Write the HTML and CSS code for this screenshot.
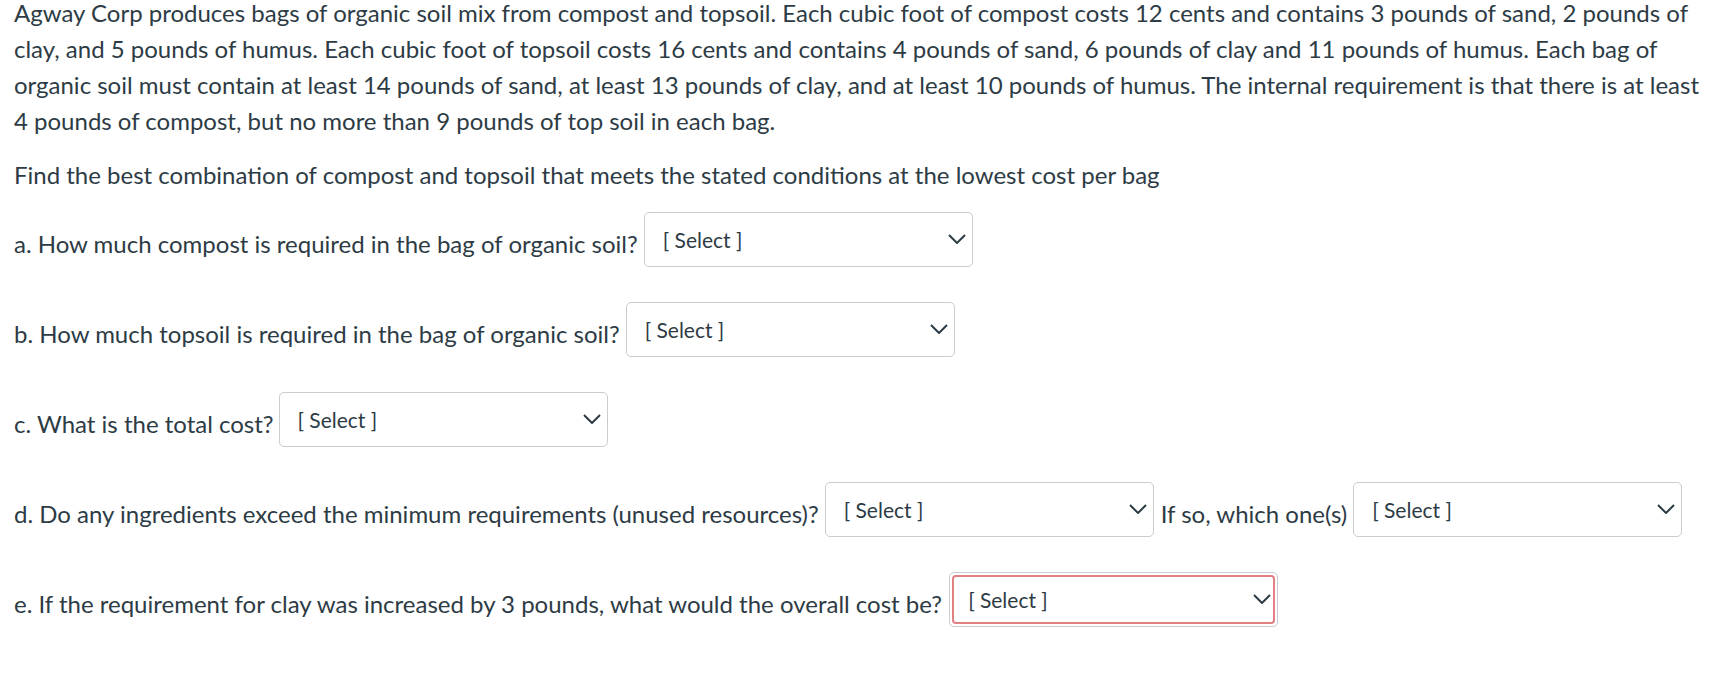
FILE: index.html
```html
<!DOCTYPE html>
<html lang="en">
<head>
<meta charset="utf-8">
<title>Agway Corp</title>
<link rel="stylesheet" href="styles.css">
</head>
<body>
<div class="page">
  <p class="intro">Agway Corp produces bags of organic soil mix from compost and topsoil. Each cubic foot of compost costs 12 cents and contains 3 pounds of sand, 2 pounds of clay, and 5 pounds of humus. Each cubic foot of topsoil costs 16 cents and contains 4 pounds of sand, 6 pounds of clay and 11 pounds of humus. Each bag of organic soil must contain at least 14 pounds of sand, at least 13 pounds of clay, and at least 10 pounds of humus. The internal requirement is that there is at least 4 pounds of compost, but no more than 9 pounds of top soil in each bag.</p>
  <p class="task">Find the best combination of compost and topsoil that meets the stated conditions at the lowest cost per bag</p>

  <div class="row">
    <span class="label">a. How much compost is required in the bag of organic soil?</span>
    <div class="select"><span class="sel-text">[ Select ]</span><svg class="chev" width="18" height="10" viewBox="0 0 18 10"><polyline points="1,1 9,9 17,1" fill="none" stroke="#2d3b45" stroke-width="2"/></svg></div>
  </div>

  <div class="row">
    <span class="label">b. How much topsoil is required in the bag of organic soil?</span>
    <div class="select"><span class="sel-text">[ Select ]</span><svg class="chev" width="18" height="10" viewBox="0 0 18 10"><polyline points="1,1 9,9 17,1" fill="none" stroke="#2d3b45" stroke-width="2"/></svg></div>
  </div>

  <div class="row">
    <span class="label">c. What is the total cost?</span>
    <div class="select narrow-gap"><span class="sel-text">[ Select ]</span><svg class="chev" width="18" height="10" viewBox="0 0 18 10"><polyline points="1,1 9,9 17,1" fill="none" stroke="#2d3b45" stroke-width="2"/></svg></div>
  </div>

  <div class="row">
    <span class="label">d. Do any ingredients exceed the minimum requirements (unused resources)?</span>
    <div class="select"><span class="sel-text">[ Select ]</span><svg class="chev" width="18" height="10" viewBox="0 0 18 10"><polyline points="1,1 9,9 17,1" fill="none" stroke="#2d3b45" stroke-width="2"/></svg></div>
    <span class="label mid">If so, which one(s)</span>
    <div class="select"><span class="sel-text">[ Select ]</span><svg class="chev" width="18" height="10" viewBox="0 0 18 10"><polyline points="1,1 9,9 17,1" fill="none" stroke="#2d3b45" stroke-width="2"/></svg></div>
  </div>

  <div class="row">
    <span class="label">e. If the requirement for clay was increased by 3 pounds, what would the overall cost be?</span>
    <div class="select focused wide-gap"><span class="sel-text">[ Select ]</span><svg class="chev" width="18" height="10" viewBox="0 0 18 10"><polyline points="1,1 9,9 17,1" fill="none" stroke="#2d3b45" stroke-width="2"/></svg></div>
  </div>
</div>
</body>
</html>
```
FILE: styles.css
```css
html, body {
  margin: 0;
  padding: 0;
  background: #ffffff;
}

body {
  font-family: Lato, "Open Sans", "Liberation Sans", sans-serif;
  font-size: 24px;
  line-height: 36px;
  color: #2d3b45;
}

.page {
  padding: 0 8px 0 14px;
}

.intro {
  margin: -5px 0 18px 0;
}

.task {
  margin: 0 0 19px 0;
}

.row {
  display: flex;
  align-items: flex-start;
  margin-bottom: 35px;
}

.label {
  padding-top: 14px;
  white-space: nowrap;
}

.label.mid {
  margin-left: 7px;
}

.select {
  position: relative;
  box-sizing: border-box;
  width: 329px;
  height: 55px;
  margin-left: 6px;
  padding: 0 6px 0 18px;
  border: 1px solid #c7cdd1;
  border-radius: 5px;
  background: #ffffff;
  display: flex;
  align-items: center;
  justify-content: space-between;
  flex-shrink: 0;
}

.select.narrow-gap {
  margin-left: 5px;
}

.select.wide-gap {
  margin-left: 7px;
}

.sel-text {
  font-size: 21px;
  line-height: 25px;
  color: #2d3b45;
  white-space: nowrap;
}

.chev {
  display: block;
  margin-bottom: 2px;
}

.select.focused::after {
  content: "";
  position: absolute;
  top: 2px;
  left: 2px;
  right: 2px;
  bottom: 2px;
  border: 2px solid #e38084;
  border-radius: 4px;
  pointer-events: none;
}
```
